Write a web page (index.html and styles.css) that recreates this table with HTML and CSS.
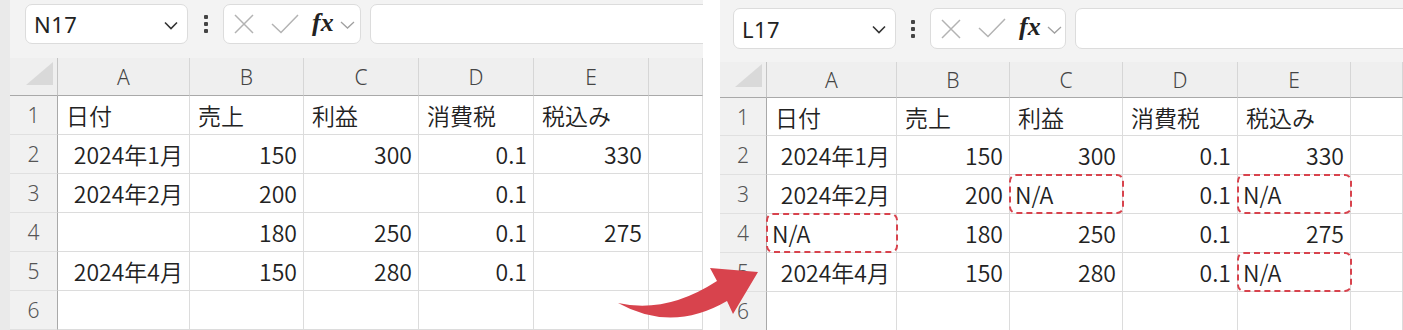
FILE: index.html
```html
<!DOCTYPE html>
<html lang="ja">
<head>
<meta charset="utf-8">
<title>Excel N/A</title>
<link rel="stylesheet" href="styles.css">
</head>
<body>
<div class="stage">
  <section class="panel panel-left">
    <div class="strip"></div>
    <div class="main">
      <div class="toolbar">
        <div class="namebox"><span class="ref">N17</span>
          <svg class="chev" width="14" height="9" viewBox="0 0 14 9"><path d="M1 1.5 L7 7.5 L13 1.5" fill="none" stroke="#333" stroke-width="1.6"/></svg>
        </div>
        <div class="dots"><i></i><i></i><i></i></div>
        <div class="fxbox">
          <svg class="ico-x" width="20" height="20" viewBox="0 0 20 20"><path d="M1 1 L19 19 M19 1 L1 19" stroke="#b3b3b3" stroke-width="1.5" fill="none"/></svg>
          <svg class="ico-check" width="28" height="20" viewBox="0 0 28 20"><path d="M1 10 L10 18.5 L27 1" stroke="#b3b3b3" stroke-width="1.5" fill="none"/></svg>
          <span class="fx">fx</span>
          <svg class="chev-s" width="15" height="8" viewBox="0 0 15 8"><path d="M1 1 L7.5 7 L14 1" fill="none" stroke="#a0a0a0" stroke-width="1.3"/></svg>
        </div>
        <div class="formula"></div>
      </div>
      <div class="sheet">
        <div class="corner"><span class="tri"></span></div>
        <div class="ch">A</div><div class="ch">B</div><div class="ch">C</div><div class="ch">D</div><div class="ch">E</div><div class="ch"></div>

        <div class="rh">1</div><div class="c">日付</div><div class="c">売上</div><div class="c">利益</div><div class="c">消費税</div><div class="c">税込み</div><div class="c"></div>
        <div class="rh">2</div><div class="c r">2024年1月</div><div class="c r">150</div><div class="c r">300</div><div class="c r">0.1</div><div class="c r">330</div><div class="c"></div>
        <div class="rh">3</div><div class="c r">2024年2月</div><div class="c r">200</div><div class="c"></div><div class="c r">0.1</div><div class="c"></div><div class="c"></div>
        <div class="rh">4</div><div class="c"></div><div class="c r">180</div><div class="c r">250</div><div class="c r">0.1</div><div class="c r">275</div><div class="c"></div>
        <div class="rh">5</div><div class="c r">2024年4月</div><div class="c r">150</div><div class="c r">280</div><div class="c r">0.1</div><div class="c"></div><div class="c"></div>
        <div class="rh">6</div><div class="c"></div><div class="c"></div><div class="c"></div><div class="c"></div><div class="c"></div><div class="c"></div>
      </div>
    </div>
  </section>

  <section class="panel panel-right">
    <div class="main">
      <div class="toolbar">
        <div class="namebox"><span class="ref">L17</span>
          <svg class="chev" width="14" height="9" viewBox="0 0 14 9"><path d="M1 1.5 L7 7.5 L13 1.5" fill="none" stroke="#333" stroke-width="1.6"/></svg>
        </div>
        <div class="dots"><i></i><i></i><i></i></div>
        <div class="fxbox">
          <svg class="ico-x" width="20" height="20" viewBox="0 0 20 20"><path d="M1 1 L19 19 M19 1 L1 19" stroke="#b3b3b3" stroke-width="1.5" fill="none"/></svg>
          <svg class="ico-check" width="28" height="20" viewBox="0 0 28 20"><path d="M1 10 L10 18.5 L27 1" stroke="#b3b3b3" stroke-width="1.5" fill="none"/></svg>
          <span class="fx">fx</span>
          <svg class="chev-s" width="15" height="8" viewBox="0 0 15 8"><path d="M1 1 L7.5 7 L14 1" fill="none" stroke="#a0a0a0" stroke-width="1.3"/></svg>
        </div>
        <div class="formula"></div>
      </div>
      <div class="sheet">
        <div class="corner"><span class="tri"></span></div>
        <div class="ch">A</div><div class="ch">B</div><div class="ch">C</div><div class="ch">D</div><div class="ch">E</div><div class="ch"></div>

        <div class="rh">1</div><div class="c">日付</div><div class="c">売上</div><div class="c">利益</div><div class="c">消費税</div><div class="c">税込み</div><div class="c"></div>
        <div class="rh">2</div><div class="c r">2024年1月</div><div class="c r">150</div><div class="c r">300</div><div class="c r">0.1</div><div class="c r">330</div><div class="c"></div>
        <div class="rh">3</div><div class="c r">2024年2月</div><div class="c r">200</div><div class="c na">N/A</div><div class="c r">0.1</div><div class="c na">N/A</div><div class="c"></div>
        <div class="rh">4</div><div class="c na">N/A</div><div class="c r">180</div><div class="c r">250</div><div class="c r">0.1</div><div class="c r">275</div><div class="c"></div>
        <div class="rh">5</div><div class="c r">2024年4月</div><div class="c r">150</div><div class="c r">280</div><div class="c r">0.1</div><div class="c na">N/A</div><div class="c"></div>
        <div class="rh">6</div><div class="c"></div><div class="c"></div><div class="c"></div><div class="c"></div><div class="c"></div><div class="c"></div>
      </div>
    </div>
  </section>

  <svg class="arrow" width="1403" height="330" viewBox="0 0 1403 330">
    <path d="M618 303 Q666 314 717 281 L710 268 L758 272 L733 314 L727 301 Q672 333 618 303 Z" fill="#d8434d"/>
  </svg>
</div>
</body>
</html>
```

FILE: styles.css
```css
* { box-sizing: border-box; }

html, body {
  margin: 0;
  padding: 0;
  background: #ffffff;
}

body {
  width: 1403px;
  height: 330px;
  overflow: hidden;
  font-family: "Noto Sans CJK JP", "Noto Sans", sans-serif;
  color: #222;
}

.stage {
  position: relative;
  display: flex;
  gap: 17px;
  width: 1403px;
  height: 330px;
}

.panel {
  display: flex;
  flex: none;
  height: 330px;
  overflow: hidden;
  background: #f3f3f3;
}

.panel-left { width: 703px; }
.panel-right { width: 683px; }

.strip {
  width: 10px;
  flex: none;
  background: #eaeaea;
}

.main {
  flex: 1;
  display: flex;
  flex-direction: column;
  min-width: 0;
}

/* ---------- toolbar ---------- */
.toolbar {
  display: flex;
  align-items: flex-start;
  flex: none;
  background: #f3f3f3;
  overflow: hidden;
}

.panel-left .toolbar { height: 58px; padding: 4px 0 0 15px; }
.panel-right .toolbar { height: 62px; padding: 8px 0 0 13px; }

.namebox,
.fxbox,
.formula {
  flex: none;
  background: #fff;
  border: 1px solid #dcdcdc;
  border-radius: 7px;
  height: 40px;
}

.panel-right .namebox,
.panel-right .fxbox,
.panel-right .formula { height: 41px; }

.namebox {
  width: 163px;
  display: flex;
  align-items: center;
  justify-content: space-between;
  padding: 0 9px 0 8px;
}

.ref {
  font-family: "Noto Sans", sans-serif;
  font-size: 22px;
  color: #222;
  letter-spacing: 0.5px;
}

.chev { margin-top: 2px; }

.dots {
  flex: none;
  width: 35px;
  height: 40px;
  display: flex;
  flex-direction: column;
  align-items: center;
  justify-content: center;
  gap: 3px;
}

.panel-right .dots { width: 34px; height: 41px; }

.dots i {
  display: block;
  width: 4px;
  height: 4px;
  background: #444;
  border-radius: 1px;
}

.fxbox {
  width: 138px;
  display: flex;
  align-items: center;
  padding: 0 0 0 10px;
}

.panel-right .fxbox { width: 136px; }

.ico-x { flex: none; margin-right: 17px; }
.ico-check { flex: none; margin-right: 13px; margin-top: -1px; }

.fx {
  font-family: "Liberation Serif", serif;
  font-style: italic;
  font-weight: bold;
  font-size: 26px;
  line-height: 1;
  color: #222;
  margin-top: -3px;
  margin-right: 6px;
}

.chev-s { flex: none; margin-top: 2px; }

.formula {
  width: 600px;
  margin-left: 9px;
  border-radius: 7px 0 0 7px;
}

/* ---------- sheet ---------- */
.sheet {
  display: grid;
  flex: 1;
  background: #fff;
}

.panel-left .sheet {
  grid-template-columns: 48px 132px 114px 115px 115px 115px 1fr;
  grid-template-rows: 38px repeat(6, 39px);
}

.panel-right .sheet {
  grid-template-columns: 47px 130px 113px 113px 115px 113px 1fr;
  grid-template-rows: 36px 38px repeat(5, 39px);
}

.corner,
.ch,
.rh,
.c {
  border-right: 1px solid #dcdcdc;
  border-bottom: 1px solid #dcdcdc;
  display: flex;
  align-items: center;
  white-space: nowrap;
}

.corner {
  background: #efefef;
  position: relative;
  justify-content: flex-end;
  align-items: flex-end;
  padding: 0 4px 10px 0;
  border-right-color: #c4c4c4;
  border-bottom-color: #a9a9a9;
}

.tri {
  width: 27px;
  height: 23px;
  background: #d9d9d9;
  clip-path: polygon(100% 0, 100% 100%, 0 100%);
}

.ch {
  background: #efefef;
  justify-content: center;
  font-family: "Noto Sans", sans-serif;
  font-weight: 300;
  font-size: 21px;
  color: #444;
  border-right-color: #d6d6d6;
  border-bottom-color: #a9a9a9;
}

.rh {
  background: #f1f1f1;
  justify-content: center;
  font-family: "Noto Sans", sans-serif;
  font-weight: 300;
  font-size: 21px;
  color: #555;
  border-right-color: #a9a9a9;
  border-bottom-color: #e0e0e0;
}

.c {
  font-size: 23px;
  font-weight: 350;
  padding: 0 6px 0 8px;
  color: #222;
}

.c.r { justify-content: flex-end; }

.c.na {
  position: relative;
  padding-left: 5px;
}

.c.na::after {
  content: "";
  position: absolute;
  top: -1px;
  left: -1px;
  right: -2px;
  bottom: -1px;
  border: 2px dashed #d8434d;
  border-radius: 7px;
}

/* ---------- arrow overlay ---------- */
.arrow {
  position: absolute;
  left: 0;
  top: 0;
  pointer-events: none;
}
```
